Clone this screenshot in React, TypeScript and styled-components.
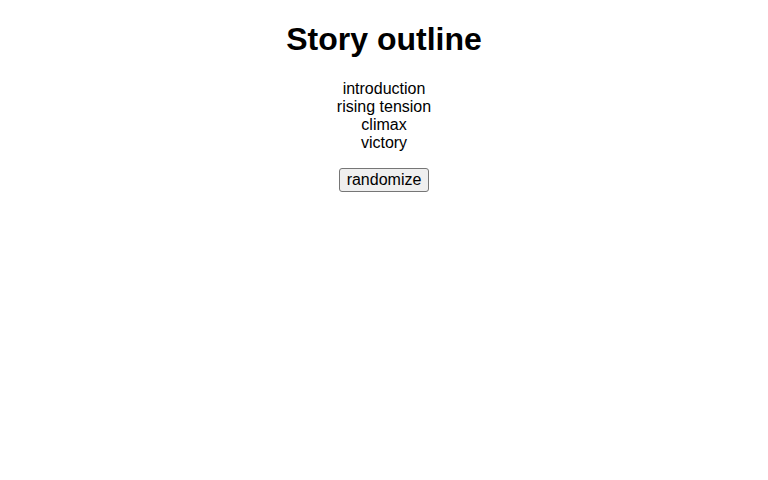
import React, { useState } from "react";
import styled, { createGlobalStyle } from "styled-components";

const GlobalStyle = createGlobalStyle`
  html, body {
    margin: 0;
    padding: 0;
    background: #ffffff;
  }
  body {
    font-family: "Liberation Sans", Arial, sans-serif;
    color: #000000;
  }
`;

const Page = styled.main`
  display: flex;
  flex-direction: column;
  align-items: center;
  text-align: center;
  padding-top: 21px;
`;

const Title = styled.h1`
  margin: 0 0 22px;
  font-size: 32px;
  font-weight: 700;
  line-height: 37px;
`;

const Steps = styled.ul`
  list-style: none;
  margin: 0;
  padding: 0;
  display: flex;
  flex-direction: column;
  align-items: center;
`;

const Step = styled.li`
  font-size: 16px;
  line-height: 18px;
`;

const ShuffleButton = styled.button`
  margin-top: 16px;
  font-family: "Liberation Sans", Arial, sans-serif;
  font-size: 16px;
  line-height: 18px;
  padding: 2px 7px;
  color: #000000;
  background: #efefef;
  border: 1px solid #767676;
  border-radius: 3px;
  cursor: pointer;
`;

const initialSteps = ["introduction", "rising tension", "climax", "victory"];

function shuffle(items: string[]): string[] {
  const next = [...items];
  for (let i = next.length - 1; i > 0; i--) {
    const j = Math.floor(Math.random() * (i + 1));
    [next[i], next[j]] = [next[j], next[i]];
  }
  return next;
}

export default function App() {
  const [steps, setSteps] = useState(initialSteps);
  return (
    <>
      <GlobalStyle />
      <Page>
        <Title>Story outline</Title>
        <Steps>
          {steps.map((s) => (
            <Step key={s}>{s}</Step>
          ))}
        </Steps>
        <ShuffleButton onClick={() => setSteps(shuffle(steps))}>randomize</ShuffleButton>
      </Page>
    </>
  );
}
